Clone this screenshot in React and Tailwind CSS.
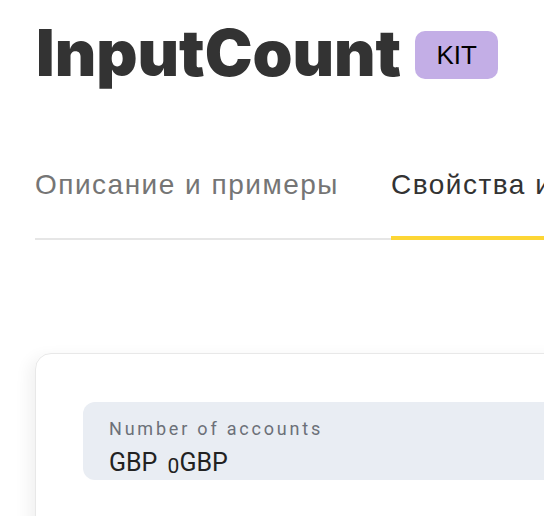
import React from 'react';

export default function App() {
  return (
    <div className="w-[544px] h-[516px] overflow-hidden bg-white pl-[35px]">
      {/* Header */}
      <div className="flex items-center gap-[14px] pt-[14px] h-[92px]">
        <h1 className="font-['Inter',sans-serif] font-black text-[64px] leading-none text-[#333333] pl-[1px]">
          InputCount
        </h1>
        <span className="flex items-center justify-center w-[83px] h-[48px] rounded-[10px] bg-[#c3aee6] text-[26px] text-black font-['Liberation_Sans',sans-serif] mt-[4px]">
          KIT
        </span>
      </div>

      {/* Tabs */}
      <div className="mt-[77px] flex border-b-2 border-[#e6e6e6] whitespace-nowrap font-['Liberation_Sans',sans-serif] text-[28px] leading-[32px] tracking-[1.5px]">
        <button className="pr-[52px] pb-[37px] text-[#757575]">Описание и примеры</button>
        <button className="pb-[35px] text-[#333333] border-b-4 border-[#fdd635] -mb-[2px]">Свойства и стили</button>
      </div>

      {/* Demo card */}
      <div className="mt-[113px] w-[560px] h-[200px] rounded-tl-[16px] border border-[#e8e8e8] shadow-[-6px_4px_16px_rgba(0,0,0,0.06)] pt-[48px] pl-[47px]">
        <div className="h-[78px] rounded-[12px] bg-[#e9edf3] pl-[26px] pt-[16px] font-['Roboto',sans-serif]">
          <div className="text-[18px] leading-[22px] tracking-[2.8px] text-[#6c7078]">Number of accounts</div>
          <div className="mt-[8px] text-[25px] leading-[29px] text-[#222222]">
            GBP <span className="inline-block ml-[4px] text-[21px] translate-y-[2px]">0</span>GBP
          </div>
        </div>
      </div>
    </div>
  );
}
